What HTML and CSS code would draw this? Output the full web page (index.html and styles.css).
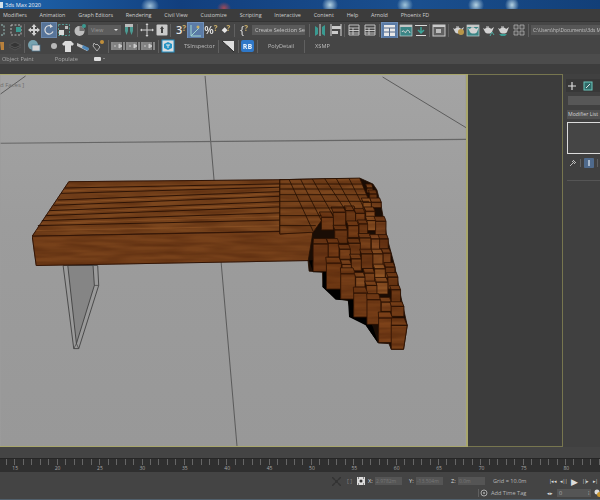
FILE: index.html
```html
<!DOCTYPE html>
<html lang="en">
<head>
<meta charset="utf-8">
<title>3ds Max 2020</title>
<link rel="stylesheet" href="styles.css">
</head>
<body>
<svg class="defs" width="0" height="0" aria-hidden="true">
  <defs>
    <symbol id="pot" viewBox="0 0 14 14"><path d="M2 5 4 6C5 4 9 4 10 6L13 4 11 9C10 11 5 11 4 9Z" fill="#e6e6e6"/><path d="M5 4h3" stroke="#e6e6e6"/></symbol>
    <symbol id="win" viewBox="0 0 14 14"><rect x="1" y="2" width="12" height="11" fill="#3b8f8f" stroke="#cfe6e6" stroke-width=".7"/><rect x="1" y="2" width="12" height="2" fill="#d8d8d8"/></symbol>
    <symbol id="tbl" viewBox="0 0 14 14"><path d="M2 2h10v10H2zM2 5h10M2 7.500h10M2 10h10M6 5v7" fill="none" stroke="#e2e2e2" stroke-width=".9"/></symbol>
    <symbol id="film" viewBox="0 0 14 14"><rect x="2" y="3" width="9" height="8" fill="#8a8a8a"/><path d="M1 3v8M13 3v8M3 7h2M8 5l3 2-3 2z" stroke="#ddd" fill="#ddd"/></symbol>
    <filter id="wood" x="0" y="0" width="100%" height="100%" color-interpolation-filters="sRGB">
      <feTurbulence type="fractalNoise" baseFrequency=".008 .07" numOctaves="2" seed="5"/>
      <feColorMatrix values="0 0 0 0 .3 0 0 0 0 .13 0 0 0 0 .03 .9 0 0 0 -.28"/>
      <feComposite in2="SourceAlpha" operator="in" result="g"/>
      <feFlood flood-color="#2e1006" flood-opacity=".2"/>
      <feComposite in2="SourceAlpha" operator="in" result="tone"/>
      <feMerge><feMergeNode in="SourceGraphic"/><feMergeNode in="g"/><feMergeNode in="tone"/></feMerge>
    </filter>
  </defs>
</svg>
<div class="app">
  <header class="title"><span class="logo"></span><span>3ds Max 2020</span></header>
  <nav class="menu">
    <span>Modifiers</span><span>Animation</span><span>Graph Editors</span><span>Rendering</span><span>Civil View</span><span>Customize</span><span>Scripting</span><span>Interactive</span><span>Content</span><span>Help</span><span>Arnold</span><span>Phoenix FD</span>
  </nav>

  <div class="bar bar-one">
    <svg class="ic first" viewBox="0 0 14 14"><rect x="2" y="2" width="10" height="10" fill="none" stroke="#a9d3cf" stroke-dasharray="2 1.500"/></svg>
    <svg class="ic m3" viewBox="0 0 14 14"><rect x="2" y="2" width="10" height="10" fill="none" stroke="#ccc" stroke-dasharray="2 1.500"/><rect x="7" y="4" width="5" height="5" fill="#3aa79c"/></svg>
    <i class="sep"></i>
    <svg class="ic" viewBox="0 0 14 14"><path d="M7 1l2.500 3H8v2h2V4.500L13 7l-3 2.500V8H8v2h1.500L7 13l-2.500-3H6V8H4v1.500L1 7l3-2.500V6h2V4H4.500z" fill="#e4e4e4"/></svg>
    <svg class="ic hl m1" viewBox="0 0 14 14"><path d="M11 8.500A4.200 4.200 0 1 1 9.500 3.400" fill="none" stroke="#f1f1f1" stroke-width="1.200"/><path d="M8 1l3 2.500-3 1.500z" fill="#f1f1f1"/></svg>
    <svg class="ic m1" viewBox="0 0 14 14"><rect x="1.500" y="1.500" width="11" height="11" fill="none" stroke="#56a7a0" stroke-dasharray="2 1.500"/><rect x="2" y="7" width="5" height="5" fill="#efefef"/><rect x="8" y="3" width="3" height="3" fill="#cfcfcf"/></svg>
    <svg class="ic m2" viewBox="0 0 14 14"><circle cx="6.500" cy="8" r="5" fill="#cfcfcf"/><path d="M6.500 8V3A5 5 0 0 1 11.500 8z" fill="#777"/><circle cx="11" cy="3" r="2" fill="#3aa79c"/></svg>
    <span class="drop m1">View<b class="caret"></b></span>
    <svg class="ic m1" viewBox="0 0 14 14"><path d="M3 2h3v6L4.500 12 3 8zM8 2h3v6l-1.500 4L8 8z" fill="#4da79e"/><rect x="3" y="1" width="8" height="3" fill="#ccc"/></svg>
    <i class="sep"></i>
    <svg class="ic" viewBox="0 0 14 14"><path d="M7 1v12M1 7h12" stroke="#e4e4e4"/><path d="M7 0l1.500 2h-3zM7 14l1.500-2h-3zM0 7l2-1.500v3zM14 7l-2-1.500v3z" fill="#e4e4e4"/></svg>
    <svg class="ic m1" viewBox="0 0 14 14"><rect x="1.500" y="1.500" width="11" height="11" rx="1" fill="#ddd"/><path d="M7 3l2 3H8v4H6V6H5z" fill="#444"/></svg>
    <i class="sep"></i>
    <span class="gly m1"><b>3</b><em>?</em></span>
    <span class="ic hl box-ic"><svg viewBox="0 0 15 15"><path d="M3 2v11h10M3 13 11 5" fill="none" stroke="#9fd6cf"/><circle cx="10" cy="4" r="1.500" fill="#c9b066"/></svg></span>
    <span class="gly m1"><b>%</b><em>?</em></span>
    <span class="gly m1"><b class="spin">◆</b><em>?</em></span>
    <i class="sep"></i>
    <span class="gly"><b class="thin">{</b><em>?</em></span>
    <span class="field m1">Create Selection Se</span>
    <i class="sep m3"></i>
    <svg class="ic" viewBox="0 0 14 14"><path d="M2 3l3 2v6l-3 2zM12 2 9 4v7l3 2z" fill="#3aa79c"/><path d="M7 1v12" stroke="#ddd"/></svg>
    <svg class="ic m2" viewBox="0 0 14 14"><path d="M2 1v12M12 1v12" stroke="#eee"/><rect x="3" y="3" width="9" height="3" fill="#ddd"/><rect x="3" y="8" width="6" height="3" fill="#ddd"/></svg>
    <i class="sep"></i>
    <svg class="ic"><use href="#tbl"/></svg>
    <svg class="ic m2"><use href="#tbl"/></svg>
    <i class="sep m1"></i>
    <span class="ic hl box-ic"><svg viewBox="0 0 15 15"><rect x="2" y="2" width="11" height="11" fill="#e8e8e8"/><path d="M2 5h11M2 9h11M7.500 5v8" stroke="#52698a"/></svg></span>
    <svg class="ic m2"><use href="#win"/><path d="M3 9c2-4 3 3 4 0s3-2 4 1" fill="none" stroke="#eee"/></svg>
    <svg class="ic m1" viewBox="0 0 14 14"><path d="M1 2h12v1H1zM2 12h10v1H2z" fill="#eee"/><path d="M7 4v5M4 7l3 3 3-3" fill="none" stroke="#3bb3a5" stroke-width="1.500"/></svg>
    <i class="sep"></i>
    <svg class="ic" viewBox="0 0 14 14"><rect x="1" y="2" width="12" height="11" fill="#666" stroke="#ddd"/><rect x="1" y="2" width="12" height="2" fill="#ddd"/><rect x="4" y="6" width="5" height="4" fill="#ccc"/></svg>
    <i class="sep m1"></i>
    <svg class="ic"><use href="#pot"/><circle cx="10" cy="9" r="3" fill="#c9a24a"/></svg>
    <svg class="ic m1"><use href="#win"/><use href="#pot"/></svg>
    <svg class="ic m1"><use href="#pot"/><path d="M9 13l2-4 2 3" fill="none" stroke="#52b8ac"/></svg>
    <svg class="ic m1"><use href="#pot"/><path d="M3 11h8l-2 2H5z" fill="#3aa79c"/></svg>
    <svg class="ic m2" viewBox="0 0 14 14"><path d="M2 2h4v4H2zM8 2h4v4H8zM2 8h4v4H2zM8 8h4v4H8z" fill="#555" stroke="#ccc" stroke-width=".7"/></svg>
    <i class="sep m1"></i>
    <span class="path">C:\Users\hp\Documents\3ds M</span>
  </div>

  <div class="bar bar-two">
    <svg class="ic first-two" viewBox="0 0 14 14"><path d="M10 3h4v8h-3z" fill="#c98a3b"/></svg>
    <svg class="ic m4" viewBox="0 0 14 14"><path d="M1 6l6-3 6 3-6 3zM1 8l6 3 6-3" fill="#333" stroke="#555"/></svg>
    <i class="sep m1"></i>
    <svg class="ic" viewBox="0 0 14 14"><circle cx="6" cy="6" r="5" fill="#7fb0bf"/><rect x="5" y="6" width="8" height="6" fill="#e8e8e8" stroke="#4b7f9f" stroke-width=".7"/></svg>
    <svg class="ic m6" viewBox="0 0 14 14"><circle cx="7" cy="7" r="3" fill="#c8c8c8"/></svg>
    <svg class="ic" viewBox="0 0 14 14"><path d="M4 2h6l3 3-2 2-1-1v7H4V6L3 7 1 5z" fill="#efefef"/></svg>
    <svg class="ic m1" viewBox="0 0 14 14"><path d="M1 4l5 2 7 4-2 2-6-3-4-2z" fill="#d8d8d8"/><path d="M7 6l6 3-1 3-6-3z" fill="#4f90c8"/></svg>
    <svg class="ic m1" viewBox="0 0 14 14"><path d="M3 4l2 2 1-1 3 3-3 4-4-5z" fill="none" stroke="#bbb"/><circle cx="11" cy="3" r="2" fill="#d29a3a"/></svg>
    <i class="sep m2"></i>
    <svg class="ic"><use href="#film"/></svg>
    <svg class="ic m1"><use href="#film"/></svg>
    <svg class="ic m1"><use href="#film"/></svg>
    <i class="sep m2"></i>
    <svg class="ic" viewBox="0 0 14 14"><rect x="1" y="1" width="12" height="12" fill="#f0f4f6" stroke="#1e9ad6"/><path d="M7 3l4 2v4l-4 2-4-2V5z" fill="#20a0d8"/><path d="M5 6h4M7 6v3" stroke="#fff"/></svg>
    <span class="lbl ts">TSInspector</span>
    <i class="sep"></i>
    <svg class="ic" viewBox="0 0 14 14"><path d="M1 2h12v11L7 7 5 6z" fill="#f2f2f2"/><path d="M1 2l12 11" stroke="#222"/></svg>
    <i class="sep m2"></i>
    <span class="rb">RB</span>
    <i class="sep m2"></i>
    <span class="lbl pd">PolyDetail</span>
    <i class="sep"></i>
    <span class="lbl xs">XSMP</span>
  </div>

  <div class="ribbon">
    <span>Object Paint</span><span class="pop">Populate</span><span class="cam"></span><b class="tri"></b>
  </div>
  <div class="blank"></div>

  <main class="work">
    <section class="view">
      <span class="vp-label">d Faces ]</span>
      <svg class="scene" viewBox="0 74 466 372">
        <defs>
          <linearGradient id="floor" x1="0" y1="0" x2="0" y2="1"><stop offset="0" stop-color="#a4a4a4"/><stop offset=".4" stop-color="#9c9c9c"/><stop offset="1" stop-color="#989898"/></linearGradient>
        </defs>
        <rect x="0" y="74" width="466" height="372" fill="url(#floor)"/>
        <g fill="none" stroke="#4a4a4a" stroke-width=".8">
          <path d="M25 75 0 93M383 76 467 127M205 75 237 446"/>
          <path d="M0 142.500 467 138.500" stroke="#666" stroke-width="1.100"/>
        </g>

        <g transform="translate(20 170) scale(.33333)">
          <path d="M128 285 160 535H175L235 345 232 285Z" fill="#9a9a9a" stroke="#3a3a3a" stroke-width="2.500"/>
          <path d="M142 285 168 520 222 345 218 285Z" fill="#858585" stroke="#3a3a3a" stroke-width="2.500"/>
          <path d="M222 345H235M160 535 168 520 175 535" fill="none" stroke="#3a3a3a" stroke-width="2"/>
        </g>

        <g transform="translate(20 170) scale(.33333)">
          <g filter="url(#wood)">
            <path d="M145 33 800 27 880 25 879 180 35 197Z" fill="#8f5424" stroke="#2e1406" stroke-width="3"/>
            <path d="M35 197 879 181V270L47 285Z" fill="#8a4e20" stroke="#2e1406" stroke-width="3"/>
          </g>
          <g fill="none" stroke="#2e1406" stroke-width="3">
            <path d="M133 52 800 39M122 68 800 49M112 88 800 62M100 104 800 76M88 120 800 92M76 135 800 108M64 150 800 126M52 165 800 148"/>
          </g>
          <g fill="none" stroke="#b5733a" stroke-width="2" opacity=".4">
            <path d="M128 60 800 44M106 96 800 69M82 128 800 100M58 158 800 137M46 180 800 165"/>
          </g>
        </g>

        <g transform="translate(280 170) scale(.33333)" stroke="#241003" stroke-width="2.500">
          <path d="M240 22 280 40 292 58 305 108 322 200 345 285 362 370 383 465 372 537H335L328 520 296 518 258 462 218 440 205 390 172 385 130 350 128 305 88 302 85 272 100 182 0 190V27Z" fill="#1a0d05"/>
          <path d="M88 270 100 305H130L128 350 168 388 205 390 208 440 258 465 296 520 280 470 262 440 220 372 180 320 140 265Z" fill="#000" stroke="none"/>
          <g filter="url(#wood)">
            <path d="M0 27 240 22 268 90 250 125 225 135 200 125 160 135 125 150 100 185 0 190Z" fill="#8f5424"/>
            <path d="M262 52h18v14h-18zM262 52h18l-4-12h-18z" fill="#8a4f22"/>
            <path d="M270 70h22v14h-22zM270 70h22l-4-12h-22z" fill="#7f4519"/>
            <path d="M275 95h30v16h-30zM275 95h30l-5-13h-30z" fill="#8c5124"/>
            <path d="M250 95h25v26h-25zM250 95h25l-5-13h-25z" fill="#a5642c"/>
            <path d="M258 122h28v30h-28zM258 122h28l-5-13h-28z" fill="#9a5a28"/>
            <path d="M198 120h30v35h-30zM198 120h30l-5-14h-30z" fill="#7c441b"/>
            <path d="M228 128h28v32h-28zM228 128h28l-5-14h-28z" fill="#87491c"/>
            <path d="M160 125h38v40h-38zM160 125h38l-6-16h-38z" fill="#7d431a"/>
            <path d="M125 140h36v38h-36zM125 140h36l-6-16h-36z" fill="#86491d"/>
            <path d="M287 152h32v48h-32zM287 152h32l-5-14h-32z" fill="#8e5226"/>
            <path d="M262 150h26v30h-26zM262 150h26l-5-13h-26z" fill="#a7652d"/>
            <path d="M205 165h32v36h-32zM205 165h32l-5-14h-32z" fill="#884a1c"/>
            <path d="M238 160h26v30h-26zM238 160h26l-5-12h-26z" fill="#7f451b"/>
            <path d="M165 178h38v40h-38zM165 178h38l-5-14h-38z" fill="#7b4219"/>
            <path d="M240 202h34v38h-34zM240 202h34l-5-13h-34z" fill="#8b4e20"/>
            <path d="M275 205h28v35h-28zM275 205h28l-5-13h-28z" fill="#99592a"/>
            <path d="M300 205h26v30h-26zM300 205h26l-5-13h-26z" fill="#7a4019"/>
            <path d="M145 218h33v42h-33zM145 218h33l-5-14h-33z" fill="#89491c"/>
            <path d="M207 218h35v46h-35zM207 218h35l-5-14h-35z" fill="#7f451b"/>
            <path d="M100 220h45v83h-45zM100 220h45l-6-16h-38z" fill="#7b411a"/>
            <path d="M180 236h32v30h-32zM180 236h32l-5-14h-32z" fill="#8b4d1f"/>
            <path d="M310 248h24v36h-24zM310 248h24l-5-13h-24z" fill="#8a4e22"/>
            <path d="M245 250h35v44h-35zM245 250h35l-5-14h-35z" fill="#7d431a"/>
            <path d="M280 250h30v40h-30zM280 250h30l-5-14h-30z" fill="#a3622c"/>
            <path d="M215 265h30v36h-30zM215 265h30l-5-14h-30z" fill="#8c4f20"/>
            <path d="M140 278h45v78h-45zM140 278h45l-7-18h-40z" fill="#844619"/>
            <path d="M187 282h28v30h-28zM187 282h28l-5-14h-28z" fill="#9a5a28"/>
            <path d="M318 290h28v32h-28zM318 290h28l-5-14h-28z" fill="#7f451b"/>
            <path d="M285 295h32v40h-32zM285 295h32l-5-14h-32z" fill="#a8672e"/>
            <path d="M255 308h30v30h-30zM255 308h30l-5-14h-30z" fill="#8d4f20"/>
            <path d="M183 310h44v76h-44zM183 310h44l-7-18h-38z" fill="#8a4c1e"/>
            <path d="M228 320h28v30h-28zM228 320h28l-5-14h-28z" fill="#9e5e2a"/>
            <path d="M325 320h30v36h-30zM325 320h30l-5-14h-30z" fill="#80461b"/>
            <path d="M290 335h35v36h-35zM290 335h35l-5-14h-35z" fill="#a2612b"/>
            <path d="M260 345h32v26h-32zM260 345h32l-5-13h-32z" fill="#8c4e1f"/>
            <path d="M335 358h28v50h-28zM335 358h28l-5-13h-28z" fill="#7f451b"/>
            <path d="M222 368h42v72h-42zM222 368h42l-7-18h-36z" fill="#87491c"/>
            <path d="M262 388h42v74h-42zM262 388h42l-7-18h-36z" fill="#8a4b1d"/>
            <path d="M305 395h30v28h-30zM305 395h30l-5-14h-30z" fill="#995827"/>
            <path d="M335 408h38v30h-38zM335 408h38l-6-14h-36z" fill="#8a4c1e"/>
            <path d="M297 443h42v74h-42zM297 443h42l-7-18h-36z" fill="#914f1f"/>
            <path d="M335 465h48l-11 72h-37zM335 465h48l-9-22h-38z" fill="#8a4c1e"/>
          </g>
          <path d="M28 27 100 182M62 25 125 150M98 25 160 135M135 24 198 120M170 24 228 128M208 23 258 122M0 40H250M0 55H262M0 72H270M0 92H268M0 112H200M0 135H125M0 165H108" fill="none"/>
        </g>
      </svg>
    </section>
    <section class="side"></section>
    <aside class="cmd">
      <div class="tabs">
        <svg class="tab" viewBox="0 0 10 10"><path d="M5 1v8M1 5h8" stroke="#ddd" stroke-width="1.200"/></svg>
        <svg class="tab m6" viewBox="0 0 10 10"><rect x="1" y="1" width="8" height="8" fill="#2f6a68" stroke="#6cc7bd"/><path d="M3 7l4-4" stroke="#e2e2e2"/></svg>
      </div>
      <div class="name"></div>
      <div class="mods">Modifier List</div>
      <div class="stack"></div>
      <div class="tools">
        <svg class="pin" viewBox="0 0 8 8"><path d="M1 7l3-3M3 2l3 3M4 1l3 3" stroke="#bbb"/></svg>
        <i class="sep tall"></i>
        <span class="btn"><i></i></span>
        <i class="sep tall"></i>
      </div>
      <div class="rule"></div>
    </aside>
  </main>

  <footer class="time">
    <div class="ruler">
      <div class="ticks"></div>
      <div class="nums"><span>15</span><span>20</span><span>25</span><span>30</span><span>35</span><span>40</span><span>45</span><span>50</span><span>55</span><span>60</span><span>65</span><span>70</span><span>75</span><span>80</span></div>
    </div>
    <div class="status">
      <div class="row">
        <svg class="dim" viewBox="0 0 9 9"><path d="M0 0l3 3M9 0 6 3M0 9l3-3M9 9 6 6" stroke="#333" stroke-width="1.500"/><rect x="3" y="3" width="3" height="3" fill="#333"/></svg>
        <span class="br">[ ]</span>
        <svg class="abs" viewBox="0 0 8 8"><rect width="8" height="8" fill="#ddd"/><circle cx="4" cy="4" r="1.500" fill="#333"/><path d="M1 1h1M6 1h1M1 7h1M6 7h1" stroke="#333"/></svg>
        <span class="ax">X:</span><span class="num">2.9782m</span>
        <span class="ax ay">Y:</span><span class="num">-13.504m</span>
        <span class="ax az">Z:</span><span class="num">0.0m</span>
        <span class="grid">Grid = 10.0m</span>
        <span class="ctrl one">|◂◂</span><span class="ctrl two">◂||</span><span class="ctrl play">▶</span><span class="ctrl">||▸</span><span class="ctrl last">▸|</span>
      </div>
      <div class="row row-two">
        <i class="sep"></i>
        <svg class="clock" viewBox="0 0 8 8"><circle cx="4" cy="4" r="3" fill="none" stroke="#aaa"/><circle cx="4" cy="4" r="1" fill="#aaa"/></svg>
        <span class="tag">Add Time Tag</span>
        <span class="ctrl swap">◂▸</span>
        <span class="frame">0<b>⁝</b></span>
        <svg class="key" viewBox="0 0 8 8"><circle cx="3" cy="3" r="2.500" fill="#ddd"/><circle cx="5.500" cy="5.500" r="2.500" fill="#c9962f"/></svg>
      </div>
    </div>
  </footer>
</div>
</body>
</html>
```
FILE: styles.css
```css
* { box-sizing: border-box; }
html, body { margin: 0; height: 100%; background: #444; overflow: hidden; }
.defs { position: absolute; }
.app {
  width: 600px; height: 500px; display: flex; flex-direction: column; overflow: hidden;
  font-family: "Open Sans", "Liberation Sans", sans-serif; font-size: 5.6px; color: #c8c8c8;
  filter: blur(.4px);
}
.title {
  height: 9px; flex: none; display: flex; align-items: center; gap: 2px; color: #e8eef4; font-size: 5.600px;
  background:
    radial-gradient(ellipse 9px 8px at 150px 6px, #9fc0d8, transparent),
    radial-gradient(ellipse 7px 6px at 224px 8px, #a04a58, transparent),
    radial-gradient(ellipse 8px 8px at 330px 5px, #b4d2e2, transparent),
    radial-gradient(ellipse 8px 8px at 405px 5px, #9fc4da, transparent),
    radial-gradient(ellipse 8px 8px at 476px 5px, #b4d2e2, transparent),
    radial-gradient(ellipse 7px 8px at 512px 5px, #b4d2e2, transparent),
    linear-gradient(90deg, #1f66ae, #123f7e 30%, #1a4f8e 70%, #123f78);
}
.logo { width: 3px; height: 6px; background: #d5e2ea; }
.menu { height: 12px; flex: none; background: #3c3c3c; display: flex; align-items: center; gap: 12.800px; padding-left: 3px; color: #cfcfcf; font-size: 5.400px; }
.bar { flex: none; display: flex; align-items: center; background: #464646; }
.bar-one { height: 17px; border-top: 1px solid #333; }
.bar-two { height: 16px; background: #454545; }
.ic { width: 14px; height: 14px; flex: none; display: block; opacity: .88; }
.ic svg { display: block; width: 15px; height: 15px; }
.box-ic { width: 15px; height: 15px; opacity: 1; }
.first { margin-left: -8px; }
.first-two { margin-left: -10px; }
.m1 { margin-left: 1px; }
.m2 { margin-left: 2px; }
.m3 { margin-left: 3px; }
.m4 { margin-left: 4px; }
.m6 { margin-left: 6px; }
.sep { width: 1px; height: 13px; margin: 0 2px 0 1px; background: #606060; flex: none; display: block; }
.sep.m1 { margin-left: 2px; }
.sep.m2 { margin-left: 3px; }
.sep.m3 { margin-left: 4px; margin-right: 3px; }
.hl { background: #5b7ba6; outline: 1px solid #6f8fb8; }
.drop { width: 33px; height: 10px; flex: none; background: #5c5c5c; color: #9a9a9a; padding-left: 3px; display: flex; align-items: center; justify-content: space-between; padding-right: 3px; }
.caret { width: 0; height: 0; border: 2px solid transparent; border-top-color: #ddd; border-bottom: 0; }
.gly { width: 14px; flex: none; display: flex; align-items: center; justify-content: center; font-size: 11px; line-height: 14px; }
.gly b { color: #e6e6e6; font-weight: 600; }
.gly em { color: #c9ad6a; font-size: 8px; font-style: normal; font-weight: 700; margin-bottom: 4px; }
.gly .spin { font-size: 7px; }
.gly .thin { font-weight: 400; }
.field { width: 53px; height: 10px; background: #5a5a5a; color: #c4c4c4; padding-left: 3px; display: flex; align-items: center; white-space: nowrap; overflow: hidden; flex: none; }
.path { flex: 1 1 0; min-width: 0; height: 10px; background: #565656; color: #c0c0c0; padding-left: 2px; white-space: nowrap; font-size: 4.800px; letter-spacing: -.05px; line-height: 10px; }
.lbl { flex: none; color: #bcbcbc; }
.ts { margin: 0 6px 0 9px; width: 27px; }
.pd { margin: 0 9px 0 8px; }
.xs { margin-left: 8px; }
.rb { width: 13px; height: 12px; background: #2f78c8; border-radius: 2px; color: #e8f2fb; font-size: 7px; font-weight: 700; display: flex; align-items: center; justify-content: center; flex: none; }
.ribbon { height: 10px; flex: none; background: #4c4c4c; display: flex; align-items: center; padding-left: 2px; color: #a6a6a6; }
.pop { margin-left: 21px; }
.cam { width: 7px; height: 4px; background: #ddd; margin-left: 16px; border-radius: 1px; }
.tri { width: 0; height: 0; border: 1.500px solid transparent; border-top-color: #bbb; margin-left: 2px; }
.blank { height: 10px; flex: none; background: #3d3d3d; }
.work { height: 373px; flex: none; display: flex; background: #404040; }
.view { width: 468px; flex: none; position: relative; border: 1px solid #a8a66c; border-width: 1px 2px 1px 0; background: #9c9c9c; }
.scene { display: block; width: 466px; height: 371px; }
.vp-label { position: absolute; left: 0; top: 6px; font-size: 6px; color: #6e6e6e; z-index: 1; }
.side { width: 95px; flex: none; background: #3c3c3c; border: 1px solid #77764f; border-left: 0; }
.cmd { flex: 1; padding: 5px 0 0 3px; display: flex; flex-direction: column; }
.tabs { height: 13px; background: #383838; display: flex; align-items: center; padding-left: 1px; }
.tab { width: 10px; height: 10px; flex: none; }
.name { height: 9px; margin: 4px 0 0 2px; background: #575757; }
.mods { height: 9px; margin: 5px 0 0 1px; background: #505050; color: #d4d4d4; line-height: 9px; padding-left: 1px; white-space: nowrap; font-size: 5.200px; }
.stack { height: 32px; margin: 3px 0 0 1px; border: 1px solid #dcdcdc; border-right: 0; background: #454545; }
.tools { height: 12px; margin-top: 3px; display: flex; align-items: center; }
.pin { width: 8px; height: 8px; margin-left: 3px; flex: none; }
.sep.tall { height: 8px; margin: 0 3px 0 3px; }
.btn { width: 10px; height: 10px; background: #4f6a8c; display: flex; align-items: center; justify-content: center; flex: none; border-radius: 1px; }
.btn i { width: 2px; height: 6px; background: #a9b9cc; }
.rule { height: 1px; background: #555; margin: 11px 0 0 1px; }
.time { flex: 1; background: #444; display: flex; flex-direction: column; padding-top: 11px; border-bottom: 1px solid #51606c; overflow: hidden; }
.ruler { height: 14px; flex: none; background: #2f2f2f; border-top: 1px solid #262626; position: relative; }
.ticks { height: 6px; background: repeating-linear-gradient(90deg, #666 0 1px, transparent 1px 8.47px); background-position: 6px 0; }
.nums { display: flex; margin-left: -6px; height: 7px; line-height: 7px; color: #a8a8a8; font-size: 5px; }
.nums span { width: 42.400px; flex: none; text-align: center; }
.status { flex: 1; padding-top: 3px; }
.row { height: 12px; display: flex; align-items: center; color: #b8b8b8; }
.row-two { height: 12px; }
.dim { width: 9px; height: 9px; margin-left: 332px; flex: none; }
.br { width: 5px; margin-left: 6px; color: #888; flex: none; white-space: nowrap; }
.abs { width: 8px; height: 8px; margin-left: 5px; flex: none; }
.ax { margin-left: 3px; width: 5px; flex: none; color: #ddd; }
.ay { margin-left: 7px; }
.az { margin-left: 8px; }
.num { width: 27px; height: 8px; margin-left: 2px; background: #555; color: #777; font-size: 5px; line-height: 8px; padding-left: 1px; flex: none; white-space: nowrap; overflow: hidden; }
.grid { margin-left: 8px; width: 54px; flex: none; white-space: nowrap; }
.ctrl { width: 11px; flex: none; color: #ddd; font-size: 5px; white-space: nowrap; letter-spacing: -.5px; text-align: center; }
.ctrl.last { width: 8px; }
.play { font-size: 9px; }
.row-two .sep { height: 8px; margin-left: 478px; margin-right: 1px; }
.clock { width: 8px; height: 8px; flex: none; }
.tag { margin-left: 3px; width: 52px; flex: none; white-space: nowrap; }
.swap { width: 13px; }
.frame { width: 34px; height: 8px; background: #555; color: #a8a8a8; line-height: 8px; padding: 0 1px 0 2px; margin-left: 1px; display: flex; justify-content: space-between; flex: none; }
.frame b { color: #ccc; font-weight: 400; }
.key { width: 8px; height: 8px; margin-left: 3px; flex: none; }
```
